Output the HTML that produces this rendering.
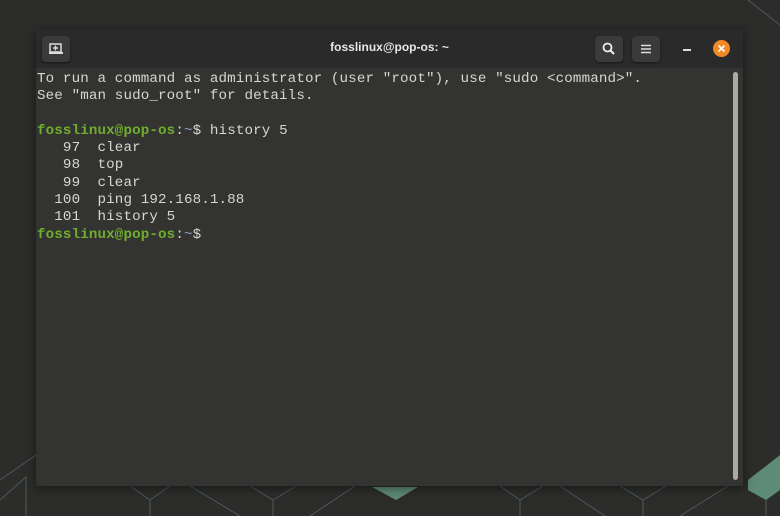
<!DOCTYPE html>
<html><head><style>
html,body{margin:0;padding:0;width:780px;height:516px;overflow:hidden;background:#2c2d2b;}
.bgsvg{position:absolute;left:0;top:0}
.win{position:absolute;left:36px;top:29px;width:707px;height:457px;background:#333432;box-shadow:0 2px 10px rgba(0,0,0,.5);}
.hdr{position:absolute;left:0;top:0;width:707px;height:39px;background:#2b2a2a;}
.btn{position:absolute;top:7px;width:28px;height:26px;background:#3a3a3a;border-radius:4px;box-shadow:0 1px 2px rgba(0,0,0,.5);}
.title{position:absolute;left:0;width:707px;top:11px;text-align:center;color:#e6e6e6;font:bold 12px "Liberation Sans",sans-serif;}
.term{position:absolute;left:1px;top:42px;font:14.2px/17.3px "Liberation Mono",monospace;letter-spacing:0.13px;color:#d6d6d4;white-space:pre;}
.g{color:#6fae2e;font-weight:bold}
.b{color:#8aa0b8}
.sb{position:absolute;left:697px;top:43px;width:5px;height:408px;background:#a9a9a9;border-radius:3px;}
</style></head><body>
<svg class="bgsvg" width="780" height="516">
<g stroke="#4c5a57" stroke-width="1" fill="none">
<path d="M0 500 L26 477 L26 516 M0 480 L36 455"/>
<path d="M130 486 L150 500 L170 486 M150 500 L150 516"/>
<path d="M190 486 L240 516"/>
<path d="M250 486 L273 500 L296 486 M273 500 L273 516"/>
<path d="M355 486 L310 516"/>
<path d="M500 486 L520 500 L543 486 M520 500 L520 516"/>
<path d="M560 486 L605 516"/>
<path d="M620 486 L643 500 L666 486 M643 500 L643 516"/>
<path d="M728 486 L680 516"/>
<path d="M748 0 L780 25 M766 516 L766 495"/>
</g>
<polygon points="372,487 418,487 396,500" fill="#5e8a78"/>
<polygon points="780,455 748,480 748,490 766,500 780,490" fill="#5e8a78"/>
</svg>
<div class="win">
<div class="hdr">
<div class="btn" style="left:6px"><svg width="28" height="26"><rect x="8" y="8" width="11" height="8" fill="none" stroke="#ddd" stroke-width="1.5"/><rect x="7" y="16" width="14" height="2" fill="#ddd"/><path d="M13.5 9.5v5M11 12h5" stroke="#ddd" stroke-width="1.4"/></svg></div>
<div class="title">fosslinux@pop-os: ~</div>
<div class="btn" style="left:559px"><svg width="28" height="26"><circle cx="12.5" cy="11.5" r="4" fill="none" stroke="#eee" stroke-width="1.8"/><path d="M15.5 14.5L19 18" stroke="#eee" stroke-width="2"/></svg></div>
<div class="btn" style="left:596px"><svg width="28" height="26"><path d="M9 9.5h10M9 13h10M9 16.5h10" stroke="#ddd" stroke-width="1.6"/></svg></div>
<div style="position:absolute;left:647px;top:20px;width:8px;height:2px;background:#ddd"></div>
<div style="position:absolute;left:677px;top:11px;width:17px;height:17px;border-radius:50%;background:#f08a24"><svg width="17" height="17"><path d="M5.5 5.5l6 6M11.5 5.5l-6 6" stroke="#fff" stroke-width="1.6"/></svg></div>
</div>
<div class="term">To run a command as administrator (user "root"), use "sudo &lt;command&gt;".
See "man sudo_root" for details.

<span class="g">fosslinux@pop-os</span>:<span class="b">~</span>$ history 5
   97  clear
   98  top
   99  clear
  100  ping 192.168.1.88
  101  history 5
<span class="g">fosslinux@pop-os</span>:<span class="b">~</span>$</div>
<div class="sb"></div>
</div>
</body></html>
